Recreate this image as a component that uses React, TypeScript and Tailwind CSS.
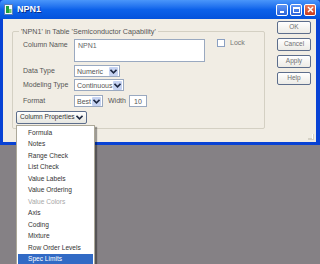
import React from "react";

const font = { fontFamily: '"Liberation Sans", Arial, sans-serif' };

function Arrow({ className = "" }: { className?: string }) {
  return (
    <svg width="7" height="5" viewBox="0 0 7 5" className={className}>
      <path d="M0.5 0.8 L3.5 3.8 L6.5 0.8" fill="none" stroke="#1f2a44" strokeWidth="1.6" />
    </svg>
  );
}

function Select({ w, text }: { w: string; text: string }) {
  return (
    <div className={`${w} h-[12px] bg-white border border-[#9aa9c0] flex items-center justify-between pl-[2px] pr-[1px]`}>
      <span className="text-[7px] text-[#555] leading-none">{text}</span>
      <div className="w-[9px] h-[9px] bg-[#c6d3f2] rounded-[1px] flex items-center justify-center">
        <Arrow />
      </div>
    </div>
  );
}

function Btn({ label }: { label: string }) {
  return (
    <div className="w-[34px] h-[13px] rounded-[2px] border border-[#5d6e8c] bg-gradient-to-b from-white to-[#ecebe6] flex items-center justify-center text-[6.5px] text-[#707070] leading-none">
      {label}
    </div>
  );
}

const items = [
  "Formula",
  "Notes",
  "Range Check",
  "List Check",
  "Value Labels",
  "Value Ordering",
  "Value Colors",
  "Axis",
  "Coding",
  "Mixture",
  "Row Order Levels",
  "Spec Limits",
];

export default function App() {
  return (
    <div className="relative w-[320px] h-[264px] overflow-hidden bg-[#858185]" style={font}>
      {/* Window */}
      <div className="w-[320px] h-[145px] flex flex-col bg-[#0842d4] pl-[3px] pr-[4px] pb-[3px]">
        {/* Title bar */}
        <div className="h-[19px] -ml-[3px] -mr-[4px] px-[4px] flex items-center bg-gradient-to-b from-[#4a96fa] via-[#0d62ea] to-[#0553dc] rounded-t-[4px]">
          <svg width="10" height="11" viewBox="0 0 10 11" className="mr-[3px]">
            <rect x="0.5" y="0.5" width="8" height="10" fill="#f4f8ff" stroke="#5a7bb8" />
            <rect x="2" y="2" width="3" height="7" fill="#1ea23c" />
            <rect x="5" y="5" width="2.5" height="4" fill="#6cc86b" />
          </svg>
          <span className="text-white font-bold text-[9px] leading-none [text-shadow:1px_1px_0_#0a2e8a]">NPN1</span>
          <div className="ml-auto flex gap-[2px] items-center">
            <div className="w-[12px] h-[12px] rounded-[2px] border border-white bg-gradient-to-b from-[#5f96f5] to-[#2b62d8] flex items-end justify-center pb-[2px]">
              <div className="w-[4px] h-[2px] bg-white" />
            </div>
            <div className="w-[12px] h-[12px] rounded-[2px] border border-white bg-gradient-to-b from-[#5f96f5] to-[#2b62d8] flex items-center justify-center">
              <div className="w-[7px] h-[6px] border border-white border-t-2" />
            </div>
            <div className="w-[12px] h-[12px] rounded-[2px] border border-white bg-gradient-to-b from-[#e9795b] to-[#c7391a] flex items-center justify-center">
              <svg width="7" height="7" viewBox="0 0 7 7">
                <path d="M1 1 L6 6 M6 1 L1 6" stroke="white" strokeWidth="1.5" />
              </svg>
            </div>
          </div>
        </div>
        {/* Client */}
        <div className="flex-1 bg-[#f1ede4] flex relative">
          {/* Group box */}
          <div className="relative mt-[12px] ml-[9px] w-[253px] h-[98px] border border-[#d4d0c3] rounded-[2px] pt-[7px] pl-[10px] text-[7px] text-[#555]">
            <span className="absolute -top-[5px] left-[6px] px-[2px] bg-[#f1ede4] text-[7.2px] leading-[9px] text-[#555]">
              'NPN1' in Table 'Semiconductor Capability'
            </span>
            <div className="flex items-start">
              <span className="w-[51px] leading-[11px]">Column Name</span>
              <div className="w-[131px] h-[23px] bg-white border border-[#9aa9c0] px-[3px] leading-[11px] text-[#666]">NPN1</div>
              <div className="ml-[12px] w-[8px] h-[8px] border border-[#8ba0c2] bg-white" />
              <span className="ml-[5px] leading-[8px] text-[#777]">Lock</span>
            </div>
            <div className="flex items-center mt-[3px]">
              <span className="w-[51px]">Data Type</span>
              <Select w="w-[46px]" text="Numeric" />
            </div>
            <div className="flex items-center mt-[2px]">
              <span className="w-[51px]">Modeling Type</span>
              <Select w="w-[50px]" text="Continuous" />
            </div>
            <div className="flex items-center mt-[4px]">
              <span className="w-[51px]">Format</span>
              <Select w="w-[29px]" text="Best" />
              <span className="ml-[5px]">Width</span>
              <div className="ml-[3px] w-[18px] h-[12px] bg-white border border-[#9aa9c0] flex items-center justify-center leading-none">10</div>
            </div>
            <div className="-ml-[7px] mt-[4px] w-[71px] h-[13px] rounded-[2px] border border-[#5d6e8c] bg-gradient-to-b from-white to-[#e6e6e0] flex items-center justify-between px-[3px] text-[6.6px] leading-none text-[#333]">
              <span>Column Properties</span>
              <Arrow />
            </div>
          </div>
          {/* Buttons */}
          <div className="ml-[12px] mt-[2px] flex flex-col gap-[4px]">
            <Btn label="OK" />
            <Btn label="Cancel" />
            <Btn label="Apply" />
            <Btn label="Help" />
          </div>
          {/* Grip */}
          <svg width="8" height="8" viewBox="0 0 8 8" className="absolute right-[1px] bottom-[1px]">
            <rect x="5" y="1" width="2" height="6" fill="#d6d2c6" />
            <rect x="1" y="5" width="6" height="2" fill="#d6d2c6" />
            <rect x="5" y="1" width="1" height="5" fill="#ffffff" />
          </svg>
        </div>
      </div>
      {/* Dropdown menu */}
      <div className="absolute left-[16px] top-[125px] w-[79px] h-[145px] bg-white border border-[#aca899] py-[1.5px] px-[1px] shadow-[2px_2px_1px_rgba(0,0,0,0.35)]">
        {items.map((it) => (
          <div
            key={it}
            className={`h-[11.5px] pl-[10px] flex items-center text-[6.6px] leading-none ${
              it === "Spec Limits" ? "bg-[#316ac5] text-white" : it === "Value Colors" ? "text-[#a7a7a7]" : "text-[#333]"
            }`}
          >
            {it}
          </div>
        ))}
      </div>
    </div>
  );
}
